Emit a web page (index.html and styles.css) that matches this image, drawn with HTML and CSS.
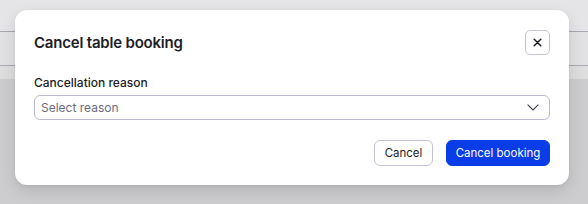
FILE: index.html
```html
<!DOCTYPE html>
<html>
<head>
<meta charset="utf-8">
<link rel="stylesheet" href="styles.css">
</head>
<body>
<div class="page">
  <div class="band band-top"></div>
  <div class="band band-mid"></div>
  <div class="band band-low"></div>
  <div class="band band-rest"></div>
</div>
<div class="modal">
  <div class="modal-head">
    <h2 class="title">Cancel table booking</h2>
    <button class="close" aria-label="Close">
      <svg width="9" height="9" viewBox="0 0 9 9"><path d="M1.2 1.2 L7.8 7.8 M7.8 1.2 L1.2 7.8" stroke="#1d1d26" stroke-width="1.5" stroke-linecap="round"/></svg>
    </button>
  </div>
  <label class="label">Cancellation reason</label>
  <div class="select">
    <span class="placeholder">Select reason</span>
    <svg class="chev" width="12" height="7" viewBox="0 0 12 7"><path d="M0.6 0.6 L6 6 L11.4 0.6" fill="none" stroke="#3c3c48" stroke-width="1.1"/></svg>
  </div>
  <div class="actions">
    <button class="btn btn-secondary">Cancel</button>
    <button class="btn btn-primary">Cancel booking</button>
  </div>
</div>
</body>
</html>
```
FILE: styles.css
```css
* { box-sizing: border-box; }
html, body { margin: 0; padding: 0; }
body {
  width: 588px;
  height: 204px;
  overflow: hidden;
  font-family: Inter, "Noto Sans", sans-serif;
  background: #cdcdd0;
  position: relative;
}
.page { display: flex; flex-direction: column; }
.band-top { height: 32px; background: #e5e5e7; border-bottom: 1px solid #a9a9b2; }
.band-mid { height: 34px; background: #e2e2e4; border-bottom: 1px solid #a9a9b2; }
.band-low { height: 13px; background: #dededf; }
.band-rest { height: 124px; background: #cdcdd0; }
.modal {
  position: absolute;
  left: 15px;
  top: 10px;
  width: 554px;
  height: 175px;
  background: #fff;
  border-radius: 12px;
  box-shadow: 0 6px 16px rgba(0,0,0,0.12), 0 1px 3px rgba(0,0,0,0.06);
  padding: 20px 19px 19px 19px;
  display: flex;
  flex-direction: column;
}
.modal-head {
  display: flex;
  justify-content: space-between;
  align-items: center;
  height: 25px;
}
.title {
  margin: 0;
  font-size: 15px;
  font-weight: 600;
  color: #1d1d26;
  letter-spacing: -0.2px;
}
.close {
  width: 25px;
  height: 25px;
  border: 1px solid #c4c4d6;
  border-radius: 5px;
  background: #fff;
  display: flex;
  align-items: center;
  justify-content: center;
  padding: 0;
}
.label {
  margin-top: 20px;
  font-size: 12px;
  font-weight: 500;
  color: #1d1d26;
  line-height: 15px;
}
.select {
  margin-top: 5px;
  height: 25px;
  border: 1px solid #b9b9cf;
  border-radius: 6px;
  display: flex;
  align-items: center;
  justify-content: space-between;
  padding: 0 10px 0 6px;
}
.placeholder {
  font-size: 12px;
  color: #6a6a80;
}
.actions {
  margin-top: auto;
  display: flex;
  justify-content: flex-end;
  gap: 13px;
}
.btn {
  height: 26px;
  font-family: Inter, "Noto Sans", sans-serif;
  font-size: 11.5px;
  border-radius: 6px;
  padding: 0;
  white-space: nowrap;
  text-align: center;
  cursor: pointer;
}
.btn-secondary {
  width: 59px;
  background: #fff;
  border: 1px solid #c4c4d6;
  color: #1d1d26;
}
.btn-primary {
  width: 104px;
  background: #0a3ce8;
  border: 1px solid #0a3ce8;
  color: #fff;
}
```
